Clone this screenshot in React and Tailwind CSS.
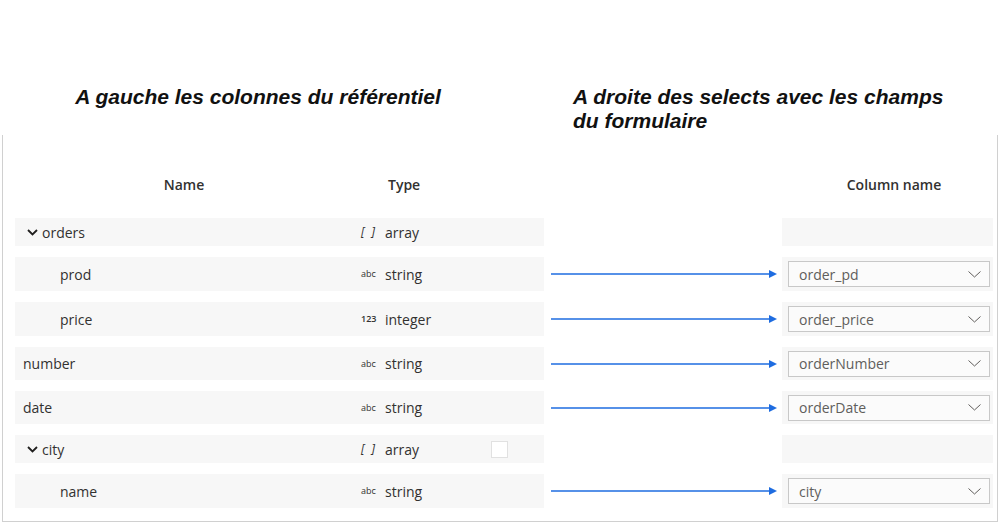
import React from "react";

const rows = [
  { name: "orders", type: "array", level: "parent", h: "h-[28px]", select: null, empty: true },
  { name: "prod", type: "string", level: "child", h: "h-[34px]", select: "order_pd" },
  { name: "price", type: "integer", level: "child", h: "h-[34px]", select: "order_price" },
  { name: "number", type: "string", level: "top", h: "h-[33px]", select: "orderNumber" },
  { name: "date", type: "string", level: "top", h: "h-[33px]", select: "orderDate" },
  { name: "city", type: "array", level: "parent", h: "h-[28px]", select: null, empty: true, checkbox: true },
  { name: "name", type: "string", level: "child", h: "h-[34px]", select: "city" },
];

function TypeIcon({ type }) {
  if (type === "array") {
    return <span className="text-[12px] italic text-[#323130] tracking-[2px]">[ ]</span>;
  }
  if (type === "integer") {
    return <span className="text-[9px] font-semibold text-[#323130]">123</span>;
  }
  return <span className="text-[9px] text-[#323130]">abc</span>;
}

function Chevron() {
  return (
    <svg width="11" height="7" viewBox="0 0 11 7" className="mr-[4px]">
      <polyline points="1,1 5.5,5.5 10,1" fill="none" stroke="#201f1e" strokeWidth="1.8" />
    </svg>
  );
}

function Arrow() {
  return (
    <svg width="226" height="10" viewBox="0 0 226 10">
      <line x1="0" y1="5" x2="219" y2="5" stroke="#1e6ce0" strokeWidth="1.5" />
      <polygon points="218,1 226,5 218,9" fill="#1e6ce0" />
    </svg>
  );
}

function Row({ row }) {
  const namePad =
    row.level === "parent" ? "pl-[12px]" : row.level === "child" ? "pl-[45px]" : "pl-[8px]";
  return (
    <div className={`flex ${row.h}`}>
      <div className="w-[529px] bg-[#f7f7f7] flex items-center">
        <div className={`w-[346px] flex items-center ${namePad}`}>
          {row.level === "parent" && <Chevron />}
          <span className="text-[14px] text-[#323130]">{row.name}</span>
        </div>
        <div className="flex items-center">
          <div className="w-[24px] flex items-center">
            <TypeIcon type={row.type} />
          </div>
          <span className="text-[14px] text-[#323130]">{row.type}</span>
          {row.checkbox && (
            <div className="ml-[72px] w-[17px] h-[17px] bg-white border border-[#e1e1e1]" />
          )}
        </div>
      </div>
      <div className="w-[238px] flex items-center pl-[7px]">
        {row.select && <Arrow />}
      </div>
      <div className="flex-1 bg-[#f7f7f7] flex items-center pl-[6px] pr-[3px]">
        {row.select && (
          <div className="w-full h-[26px] border border-[#c8c8c8] bg-[#fbfbfb] flex items-center justify-between pl-[10px] pr-[8px]">
            <span className="text-[14px] text-[#605e5c]">{row.select}</span>
            <svg width="13" height="7" viewBox="0 0 13 7">
              <polyline points="0.5,0.5 6.5,6 12.5,0.5" fill="none" stroke="#605e5c" strokeWidth="1" />
            </svg>
          </div>
        )}
      </div>
    </div>
  );
}

export default function App() {
  return (
    <div className="w-[1000px] h-[523px] bg-white overflow-hidden" style={{ fontFamily: '"Open Sans", "Noto Sans", sans-serif' }}>
      <div
        className="flex pt-[85px] h-[135px] text-[21px] leading-[24px] font-bold italic text-[#111]"
        style={{ fontFamily: '"Liberation Sans", Arial, sans-serif' }}
      >
        <div className="w-[516px] text-center">A gauche les colonnes du référentiel</div>
        <div className="ml-[57px] w-[390px]">A droite des selects avec les champs du formulaire</div>
      </div>
      <div className="mx-[2px] border-l border-r border-b border-[#d0d0d0] pl-[12px] pr-[4px] pb-[13px]">
        <div className="flex h-[83px] pt-[41px] text-[14px] leading-[18px] font-semibold text-[#323130]">
          <div className="w-[529px] flex">
            <div className="w-[346px] text-center pr-[8px]">Name</div>
            <div className="pl-[27px]">Type</div>
          </div>
          <div className="w-[238px]" />
          <div className="flex-1 text-center pl-[13px]">Column name</div>
        </div>
        <div className="flex flex-col gap-[11px]">
          {rows.map((row) => (
            <Row key={row.name} row={row} />
          ))}
        </div>
      </div>
    </div>
  );
}
